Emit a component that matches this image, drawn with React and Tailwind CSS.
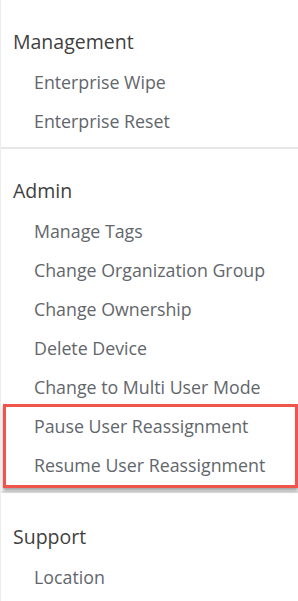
import React from 'react';

const sections = [
    { title: 'Management', items: ['Enterprise Wipe', 'Enterprise Reset'] },
    {
        title: 'Admin',
        items: ['Manage Tags', 'Change Organization Group', 'Change Ownership', 'Delete Device', 'Change to Multi User Mode'],
        highlighted: ['Pause User Reassignment', 'Resume User Reassignment'],
    },
    { title: 'Support', items: ['Location'] },
];

const Item = ({ label }) => (
    <div className="h-[39px] flex items-center pl-[33px] text-[17.8px] text-[#62666b] whitespace-nowrap">{label}</div>
);

const App = () => {
    return (
        <div className="w-[298px] h-[601px] overflow-hidden bg-white border-l border-[#ededed] font-['Open_Sans',sans-serif]">
            {sections.map((s, i) => (
                <div key={s.title} className={i < 2 ? 'pt-[21px] pb-[6px] border-b-2 border-[#e6e6e6]' : 'pt-[23px]'}>
                    <div className="h-[42px] flex items-center pl-[12px] text-[19.5px] text-[#3f3f3f]">{s.title}</div>
                    {s.items.map(label => <Item key={label} label={label} />)}
                    {s.highlighted && (
                        <div className="relative">
                            {s.highlighted.map(label => <Item key={label} label={label} />)}
                            <div className="absolute top-[-3px] bottom-[-3px] left-[2px] right-0 border-[3px] border-[#f0554b] shadow-[0_3px_3px_rgba(0,0,0,0.35)]"></div>
                        </div>
                    )}
                </div>
            ))}
        </div>
    );
};

export default App;
